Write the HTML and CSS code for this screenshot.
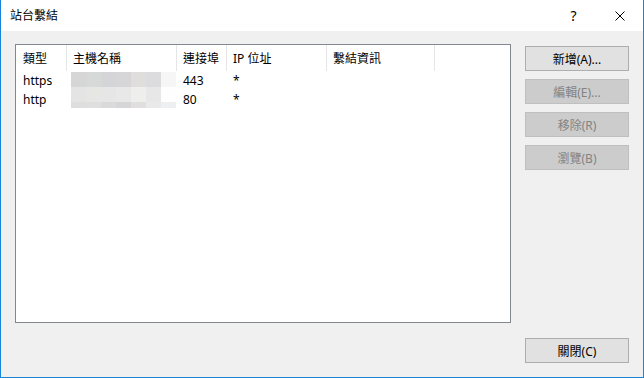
FILE: index.html
```html
<!DOCTYPE html>
<html lang="zh-Hant">
<head>
<meta charset="utf-8">
<title>站台繫結</title>
<link rel="stylesheet" href="styles.css">
</head>
<body>
<div class="window">
  <div class="titlebar">
    <div class="title">站台繫結</div>
    <div class="caption-btn help">?</div>
    <div class="caption-btn close">
      <svg width="10" height="10" viewBox="0 0 10 10"><path d="M0.5 0.5 L9.5 9.5 M9.5 0.5 L0.5 9.5" stroke="#000" stroke-width="1" fill="none"/></svg>
    </div>
  </div>
  <div class="content">
    <div class="listbox">
      <div class="header">
        <div class="hcell c1">類型</div>
        <div class="hcell c2">主機名稱</div>
        <div class="hcell c3">連接埠</div>
        <div class="hcell c4">IP 位址</div>
        <div class="hcell c5">繫結資訊</div>
      </div>
      <div class="row">
        <div class="cell c1">https</div>
        <div class="cell c2"></div>
        <div class="cell c3">443</div>
        <div class="cell c4">*</div>
      </div>
      <div class="row">
        <div class="cell c1">http</div>
        <div class="cell c2"></div>
        <div class="cell c3">80</div>
        <div class="cell c4">*</div>
      </div>
      <div class="mosaic">
        <span style="background:#d6d6d6"></span><span style="background:#d7d9d9"></span><span style="background:#d5d5d7"></span><span style="background:#d6d6d8"></span><span style="background:#dfdedd"></span><span style="background:#dcdcde"></span><span style="background:#f6f6f6"></span>
        <span style="background:#e4e4e4"></span><span style="background:#e6e6e4"></span><span style="background:#e6e6e6"></span><span style="background:#e8e8e8"></span><span style="background:#eeeeec"></span><span style="background:#e7e7e7"></span><span style="background:#fefefe"></span>
        <span style="background:#dedede"></span><span style="background:#dfdfdf"></span><span style="background:#dadada"></span><span style="background:#d6d6d8"></span><span style="background:#e0dfdd"></span><span style="background:#e9e9e9"></span><span style="background:#eeeff1"></span>
      </div>
    </div>
    <div class="side">
      <div class="btn-group">
        <div class="btn">新增(A)...</div>
        <div class="btn disabled">編輯(E)...</div>
        <div class="btn disabled">移除(R)</div>
        <div class="btn disabled">瀏覽(B)</div>
      </div>
      <div class="btn">關閉(C)</div>
    </div>
  </div>
</div>
</body>
</html>
```
FILE: styles.css
```css
* { box-sizing: border-box; }
html, body { margin: 0; padding: 0; }
body {
  font-family: "Noto Sans", "Noto Sans CJK TC", sans-serif;
  font-size: 12px;
  color: #000;
  background: #fff;
}
.window {
  width: 644px;
  height: 378px;
  border: 1px solid #1883d7;
  border-top: none;
  background: #f0f0f0;
  display: flex;
  flex-direction: column;
}
.titlebar {
  height: 31px;
  background: #fff;
  display: flex;
  align-items: center;
  padding-left: 9px;
  flex: none;
}
.title {
  flex: 1;
  line-height: 31px;
}
.caption-btn {
  width: 46px;
  height: 31px;
  display: flex;
  align-items: center;
  justify-content: center;
}
.help {
  font-size: 14px;
  padding-right: 1px;
}
.close svg { display: block; }
.content {
  flex: 1;
  display: flex;
  gap: 14px;
  padding: 13px 14px 14px 14px;
}
.listbox {
  position: relative;
  width: 496px;
  height: 279px;
  border: 1px solid #828790;
  background: #fff;
}
.header {
  display: flex;
  height: 26px;
}
.hcell {
  height: 26px;
  line-height: 27px;
  border-right: 1px solid #e5e5e5;
  padding-left: 6px;
  white-space: nowrap;
}
.row {
  display: flex;
  height: 19px;
  line-height: 19px;
}
.cell {
  padding-left: 6px;
  white-space: nowrap;
}
.c1 { width: 51px; padding-left: 7px; }
.c2 { width: 110px; }
.c3 { width: 50px; }
.c4 { width: 100px; }
.c5 { width: 108px; }
.mosaic {
  position: absolute;
  left: 55px;
  top: 27px;
  width: 105px;
  display: grid;
  grid-template-columns: 15px 15px 15px 15px 15px 15px 15px;
  grid-template-rows: 15px 15px 6px;
}
.mosaic span { display: block; }
.side {
  width: 104px;
  display: flex;
  flex-direction: column;
  justify-content: space-between;
  padding-top: 2px;
}
.btn-group {
  display: flex;
  flex-direction: column;
  gap: 8px;
}
.btn {
  height: 25px;
  border: 1px solid #adadad;
  background: #e1e1e1;
  display: flex;
  align-items: center;
  justify-content: center;
  white-space: nowrap;
}
.btn.disabled {
  background: #cccccc;
  border-color: #bfbfbf;
  color: #838383;
}
```
